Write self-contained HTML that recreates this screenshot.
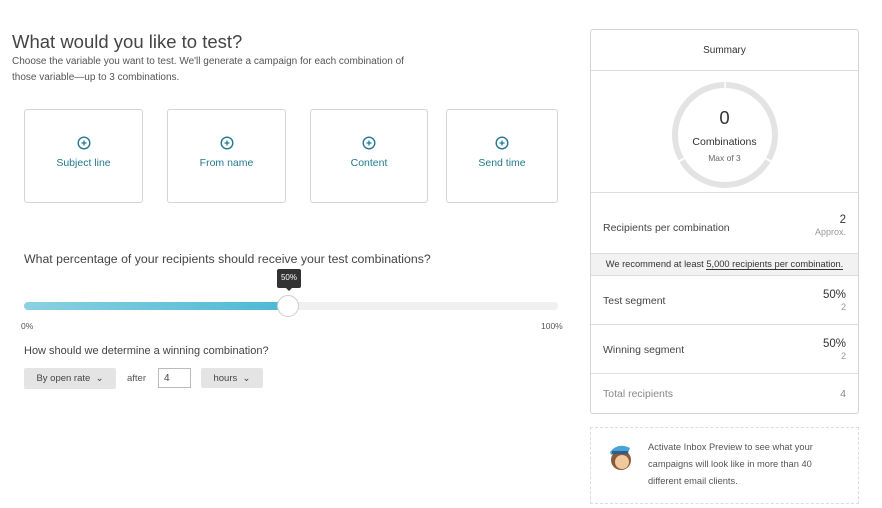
<!DOCTYPE html>
<html><head><style>
*{box-sizing:border-box;margin:0;padding:0}
body{width:882px;height:508px;background:#fff;font-family:"Liberation Sans",sans-serif;color:#444;position:relative;overflow:hidden}
.a{position:absolute}
.box{position:absolute;top:109px;height:94px;border:1px solid #d4d4d4;border-radius:3px;text-align:center;color:#23798f;font-size:10.5px}
.box svg{position:absolute;top:26px;left:50%;margin-left:-7px}
.box .l{position:absolute;top:47px;width:100%}
.sel{position:absolute;background:#e4e4e4;border-radius:2px;font-size:9.5px;color:#444;text-align:center;line-height:20px}
.row{position:absolute;left:0;right:0;border-top:1px solid #ddd;font-size:10.5px}
.row .k{position:absolute;left:12px}
.row .v{position:absolute;right:12px;text-align:right;font-size:11.5px;color:#333;line-height:12px}
.row .v small{display:block;font-size:9px;color:#999}
</style></head><body>
<div class="a" style="left:12px;top:31px;font-size:18.5px;color:#444">What would you like to test?</div>
<div class="a" style="left:12px;top:54px;font-size:10px;line-height:16px;color:#555;white-space:nowrap">Choose the variable you want to test. We'll generate a campaign for each combination of<br>those variable—up to 3 combinations.</div>
<div class="box" style="left:24px;width:119px"><svg width="14" height="14" viewBox="0 0 14 14"><circle cx="7" cy="7" r="5.8" fill="none" stroke="#23798f" stroke-width="1.4"/><path d="M4.5 7H9.5M7 4.5V9.5" stroke="#23798f" stroke-width="1.3"/></svg><div class="l">Subject line</div></div>
<div class="box" style="left:167px;width:119px"><svg width="14" height="14" viewBox="0 0 14 14"><circle cx="7" cy="7" r="5.8" fill="none" stroke="#23798f" stroke-width="1.4"/><path d="M4.5 7H9.5M7 4.5V9.5" stroke="#23798f" stroke-width="1.3"/></svg><div class="l">From name</div></div>
<div class="box" style="left:310px;width:118px"><svg width="14" height="14" viewBox="0 0 14 14"><circle cx="7" cy="7" r="5.8" fill="none" stroke="#23798f" stroke-width="1.4"/><path d="M4.5 7H9.5M7 4.5V9.5" stroke="#23798f" stroke-width="1.3"/></svg><div class="l">Content</div></div>
<div class="box" style="left:446px;width:112px"><svg width="14" height="14" viewBox="0 0 14 14"><circle cx="7" cy="7" r="5.8" fill="none" stroke="#23798f" stroke-width="1.4"/><path d="M4.5 7H9.5M7 4.5V9.5" stroke="#23798f" stroke-width="1.3"/></svg><div class="l">Send time</div></div>
<div class="a" style="left:24px;top:252px;font-size:12.3px;color:#444">What percentage of your recipients should receive your test combinations?</div>
<div class="a" style="left:277px;top:269px;width:24px;height:19px;background:#333;border-radius:2px;color:#fff;font-size:8px;text-align:center;line-height:18px">50%</div>
<div class="a" style="left:286px;top:288px;border-left:3px solid transparent;border-right:3px solid transparent;border-top:3px solid #333"></div>
<div class="a" style="left:24px;top:302px;width:534px;height:8px;background:#f0f0f0;border-radius:4px"></div>
<div class="a" style="left:24px;top:302px;width:264px;height:8px;background:linear-gradient(90deg,#8ad0e2,#4db9d4);border-radius:4px"></div>
<div class="a" style="left:277px;top:295px;width:22px;height:22px;background:#fff;border:1px solid #ccc;border-radius:50%"></div>
<div class="a" style="left:21px;top:321px;font-size:8.5px;color:#555">0%</div>
<div class="a" style="left:541px;top:321px;font-size:8.5px;color:#555">100%</div>
<div class="a" style="left:24px;top:345px;font-size:11px;color:#444">How should we determine a winning combination?</div>
<div class="sel" style="left:24px;top:368px;width:92px;height:21px;line-height:22px">By open rate &nbsp;⌄</div>
<div class="a" style="left:127px;top:373px;font-size:9.5px;color:#555">after</div>
<div class="a" style="left:158px;top:368px;width:33px;height:20px;border:1px solid #bbb;font-size:10px;padding:4px 0 0 5px">4</div>
<div class="sel" style="left:201px;top:368px;width:62px;height:20px;line-height:21px">hours &nbsp;⌄</div>

<div class="a" style="left:590px;top:29px;width:269px;height:385px;border:1px solid #d4d4d4;border-radius:3px">
 <div class="a" style="left:0;right:0;top:15px;text-align:center;font-size:10px;color:#333">Summary</div>
 <div class="row" style="top:40px;height:122px">
  <svg class="a" style="left:79px;top:9px" width="110" height="110" viewBox="0 0 110 110"><circle cx="55" cy="55" r="50" fill="none" stroke="#e3e3e3" stroke-width="6" stroke-dasharray="102.7 2" transform="rotate(-89 55 55)"/></svg>
  <div class="a" style="left:0;right:0;top:36px;text-align:center;font-size:18.5px;color:#333">0</div>
  <div class="a" style="left:0;right:0;top:65px;text-align:center;font-size:10.5px;color:#333">Combinations</div>
  <div class="a" style="left:0;right:0;top:82px;text-align:center;font-size:8.5px;color:#666">Max of 3</div>
 </div>
 <div class="row" style="top:162px;height:61px"><div class="k" style="top:29px">Recipients per combination</div><div class="v" style="top:21px">2<small>Approx.</small></div></div>
 <div class="row" style="top:223px;height:22px;background:#f2f2f2;text-align:center;font-size:9.3px;line-height:20px;color:#333">We recommend at least <span style="border-bottom:1px solid #333">5,000 recipients per combination.</span></div>
 <div class="row" style="top:245px;height:49px"><div class="k" style="top:19px">Test segment</div><div class="v" style="top:13px">50%<small>2</small></div></div>
 <div class="row" style="top:294px;height:49px"><div class="k" style="top:19px">Winning segment</div><div class="v" style="top:13px">50%<small>2</small></div></div>
 <div class="row" style="top:343px;height:41px;color:#888"><div class="k" style="top:14px">Total recipients</div><div class="v" style="top:14px;color:#888;font-size:10.5px">4</div></div>
</div>

<div class="a" style="left:590px;top:427px;width:269px;height:77px;border:1px dashed #ddd">
 <svg class="a" style="left:15px;top:14px" width="28" height="30" viewBox="0 0 28 30"><ellipse cx="15" cy="18" rx="10" ry="10" fill="#8a5a3c"/><ellipse cx="16" cy="20" rx="7" ry="7" fill="#f0c99c"/><path d="M4 10 Q12 0 24 6 L22 11 Q13 8 5 13Z" fill="#4aa3d8"/><rect x="6" y="9" width="16" height="3" fill="#2b5f8a"/></svg>
 <div class="a" style="left:57px;top:11px;width:185px;font-size:9.3px;line-height:17px;color:#555">Activate Inbox Preview to see what your campaigns will look like in more than 40 different email clients.</div>
</div>
</body></html>
